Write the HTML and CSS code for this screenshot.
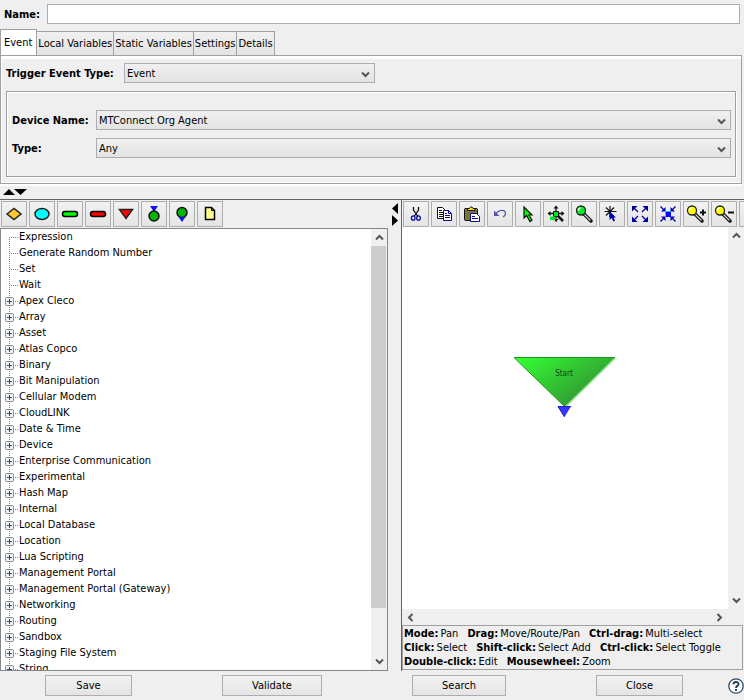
FILE: index.html
```html
<!DOCTYPE html>
<html lang="en">
<head>
<meta charset="utf-8">
<title>Trigger editor</title>
<link rel="stylesheet" href="styles.css">
</head>
<body>
<svg class="defs" aria-hidden="true">
  <symbol id="chev-down" viewBox="0 0 9 7"><path d="M1 1.5 4.5 5 8 1.5" fill="none" stroke="#555" stroke-width="2"/></symbol>
  <symbol id="chev-up" viewBox="0 0 9 7"><path d="M1 5.5 4.5 2 8 5.5" fill="none" stroke="#555" stroke-width="2"/></symbol>
  <symbol id="plus" viewBox="0 0 9 9"><rect x=".5" y=".5" width="8" height="8" rx="1" fill="#f2f2f2" stroke="#8b8b8b"/><path d="M2 4.5h5M4.5 2v5" stroke="#2c4a9a"/></symbol>
  <symbol id="lens" viewBox="0 0 24 24"><path d="m12 12 7 7" stroke="#111" stroke-width="3.5" stroke-linecap="round"/><path d="m12.500 12.500 6 6" stroke="#ccc" stroke-width="1.300"/><circle cx="9" cy="8.500" r="4.500" fill="currentColor" stroke="#222" stroke-width="1.300"/><path d="M6.500 8.500a2.500 2.500 0 0 1 2-2.500" fill="none" stroke="#fff" stroke-width="1.500"/></symbol>
</svg>

<div class="name-row">
  <label for="name">Name:</label>
  <input id="name" type="text">
</div>

<div class="tabs" role="tablist">
  <button class="tab selected" role="tab" aria-selected="true">Event</button>
  <button class="tab" role="tab">Local Variables</button>
  <button class="tab" role="tab">Static Variables</button>
  <button class="tab" role="tab">Settings</button>
  <button class="tab" role="tab">Details</button>
</div>

<section class="tab-panel">
  <div class="field trigger">
    <label for="trigger">Trigger Event Type:</label>
    <div class="combo short"><select id="trigger"><option>Event</option></select><svg><use href="#chev-down"/></svg></div>
  </div>
  <div class="group">
    <label for="device">Device Name:</label>
    <div class="combo"><select id="device"><option>MTConnect Org Agent</option></select><svg><use href="#chev-down"/></svg></div>
    <label for="type">Type:</label>
    <div class="combo"><select id="type"><option>Any</option></select><svg><use href="#chev-down"/></svg></div>
  </div>
</section>

<div class="divider-h">
  <svg viewBox="0 0 24 6" width="24" height="6"><path d="M0 6 6 0l6 6zM11 0h13l-6.500 6z"/></svg>
</div>

<main class="split">
  <section class="left">
    <div class="toolbar">
      <button class="tool" aria-label="Decision"><svg viewBox="0 0 24 24"><path d="m5 12 7-5.500 7 5.500-7 5.500z" fill="#ffc931" stroke="#222" stroke-width="1.500"/></svg></button>
      <button class="tool" aria-label="Ellipse"><svg viewBox="0 0 24 24"><ellipse cx="12" cy="12" rx="7" ry="5.500" fill="#0ff" stroke="#222" stroke-width="1.500"/></svg></button>
      <button class="tool" aria-label="Success end"><svg viewBox="0 0 24 24"><rect x="4.500" y="9.500" width="15" height="5" rx="2.500" fill="#0f0" stroke="#000" stroke-width="1.500"/></svg></button>
      <button class="tool" aria-label="Failure end"><svg viewBox="0 0 24 24"><rect x="4.500" y="9.500" width="15" height="5" rx="2.500" fill="#f00" stroke="#000" stroke-width="1.500"/></svg></button>
      <button class="tool" aria-label="Start"><svg viewBox="0 0 24 24"><path d="M5.500 7.500h13L12 16.500z" fill="#f00" stroke="#222" stroke-width="1.500"/></svg></button>
      <button class="tool" aria-label="Input"><svg viewBox="0 0 24 24"><path d="M8 4h8l-4 6z" fill="#11f"/><circle cx="12" cy="14" r="5" fill="#00b400" stroke="#111" stroke-width="1.500"/></svg></button>
      <button class="tool" aria-label="Output"><svg viewBox="0 0 24 24"><circle cx="12" cy="10.500" r="5" fill="#00b400" stroke="#111" stroke-width="1.500"/><path d="M8.500 15h7L12 20z" fill="#11f"/></svg></button>
      <button class="tool" aria-label="Note"><svg viewBox="0 0 24 24"><path d="M7.500 5.500h6l3 3v9h-9z" fill="#ffff8c" stroke="#000" stroke-width="1.500"/><path d="M13.500 5.500v3h3" fill="none" stroke="#000"/></svg></button>
    </div>
    <div class="tree-box">
      <ul class="tree">
        <li class="leaf">Expression</li>
        <li class="leaf">Generate Random Number</li>
        <li class="leaf">Set</li>
        <li class="leaf">Wait</li>
        <li><svg><use href="#plus"/></svg>Apex Cleco</li>
        <li><svg><use href="#plus"/></svg>Array</li>
        <li><svg><use href="#plus"/></svg>Asset</li>
        <li><svg><use href="#plus"/></svg>Atlas Copco</li>
        <li><svg><use href="#plus"/></svg>Binary</li>
        <li><svg><use href="#plus"/></svg>Bit Manipulation</li>
        <li><svg><use href="#plus"/></svg>Cellular Modem</li>
        <li><svg><use href="#plus"/></svg>CloudLINK</li>
        <li><svg><use href="#plus"/></svg>Date &amp; Time</li>
        <li><svg><use href="#plus"/></svg>Device</li>
        <li><svg><use href="#plus"/></svg>Enterprise Communication</li>
        <li><svg><use href="#plus"/></svg>Experimental</li>
        <li><svg><use href="#plus"/></svg>Hash Map</li>
        <li><svg><use href="#plus"/></svg>Internal</li>
        <li><svg><use href="#plus"/></svg>Local Database</li>
        <li><svg><use href="#plus"/></svg>Location</li>
        <li><svg><use href="#plus"/></svg>Lua Scripting</li>
        <li><svg><use href="#plus"/></svg>Management Portal</li>
        <li><svg><use href="#plus"/></svg>Management Portal (Gateway)</li>
        <li><svg><use href="#plus"/></svg>Networking</li>
        <li><svg><use href="#plus"/></svg>Routing</li>
        <li><svg><use href="#plus"/></svg>Sandbox</li>
        <li><svg><use href="#plus"/></svg>Staging File System</li>
        <li><svg><use href="#plus"/></svg>String</li>
      </ul>
      <div class="vscroll"><svg><use href="#chev-up"/></svg><span class="track"><span class="thumb"></span></span><svg><use href="#chev-down"/></svg></div>
    </div>
  </section>

  <div class="divider-v"><svg viewBox="0 0 6 23" width="6" height="23"><path d="M6 0v11L0 5.500zM0 12v11l6-5.500z"/></svg></div>

  <section class="right">
    <div class="toolbar">
      <button class="tool" aria-label="Cut"><svg viewBox="0 0 24 24"><path d="M9.500 5v3l4 6M14.500 5v3l-4 6" fill="none" stroke="#111" stroke-width="1.300"/><ellipse cx="9.200" cy="16" rx="1.800" ry="2.200" fill="none" stroke="#0a0aa0" stroke-width="1.300"/><ellipse cx="14.500" cy="16" rx="1.800" ry="2.200" fill="none" stroke="#0a0aa0" stroke-width="1.300"/></svg></button>
      <button class="tool" aria-label="Copy"><svg viewBox="0 0 24 24"><path d="M5.500 5.500h5l3 3v8h-8z" fill="#fff" stroke="#111"/><path d="M7 8.500h3M7 10.500h4M7 12.500h4M7 14.500h4" stroke="#111"/><path d="M11.500 8.500h5l3 3v7h-8z" fill="#fff" stroke="#0a0a90"/><path d="M16.500 8.500v3h3M13 11.500h2M13 13.500h5M13 15.500h5" fill="none" stroke="#0a0a90"/></svg></button>
      <button class="tool" aria-label="Paste"><svg viewBox="0 0 24 24"><rect x="4.500" y="6.500" width="13" height="12" rx="1" fill="#77773a" stroke="#111"/><path d="M7.500 8.500v-2h2l1-1.500h1.500l1 1.500h2v2z" fill="#ffe21c" stroke="#111"/><path d="M10.500 11.500h6l3 3v5h-9z" fill="#fff" stroke="#0a0a90"/><path d="M12 14.500h3M12 16.500h6" stroke="#0a0a90"/></svg></button>
      <button class="tool" aria-label="Undo"><svg viewBox="0 0 24 24"><path d="M7.500 12.500C10.500 7.500 17.500 7 17.500 11.500q0 2-2.500 3.500" fill="none" stroke="#5555ab" stroke-width="1.300"/><path d="M6 8.500V14h5.500z" fill="#5555ab"/></svg></button>
      <button class="tool" aria-label="Select"><svg viewBox="0 0 24 24"><path d="M8 5v11l2.500-2.500 3.500 6 2-1.500-3-5h3z" fill="#0f0" stroke="#111" stroke-width="1.200"/></svg></button>
      <button class="tool" aria-label="Pan"><svg viewBox="0 0 24 24"><path d="M12 5v13M4.500 11.500h15" stroke="#111" stroke-width="1.300"/><path d="m12 3.500 2.500 3h-5zM12 20l2.500-3h-5zM3.500 11.500l3-2.500v5zM20.500 11.500l-3-2.500v5z" fill="#111"/><path d="m13 13 6 6" stroke="#111" stroke-width="2.500"/><path d="M9.500 9.500h5v5h-5z" fill="#00e82a" stroke="#111"/><path d="M6 14.500h5.500v3.500H6z" fill="#00e82a"/></svg></button>
      <button class="tool green" aria-label="Zoom"><svg><use href="#lens"/></svg></button>
      <button class="tool" aria-label="Select point"><svg viewBox="0 0 24 24"><path d="M10 4v11M4.500 9.500h12M6 5.500l4 4-4 4M14 5.500l-4 4" fill="none" stroke="#111" stroke-width="1.200"/><path d="M9.500 9v9l2-2 2 3.500 1.500-1-1.500-3h2.500z" fill="#0000a8"/></svg></button>
      <button class="tool" aria-label="Fit all"><svg viewBox="0 0 24 24"><path d="M4 4h5.500L4 9.500zM20 4v5.500L14.500 4zM4 20v-5.500L9.500 20zM20 20h-5.500l5.500-5.500z" fill="#0000a8"/><path d="m5 5 5 5M19 5l-5 5M5 19l5-5M19 19l-5-5" stroke="#0000a8" stroke-width="1.300"/></svg></button>
      <button class="tool" aria-label="Fit selection"><svg viewBox="0 0 24 24"><path d="M9.500 5v4.500H5zM14.500 5v4.500H19zM9.500 19v-4.500H5zM14.500 19v-4.500H19z" fill="#0000a8"/><path d="m4.500 4.500 4 4M19.500 4.500l-4 4M4.500 19.500l4-4M19.500 19.500l-4-4" stroke="#0000a8" stroke-width="1.300"/><path d="M9 9h6v6H9z" fill="#1cf"/><path d="M10 10h5v5h-5z" fill="#00f"/></svg></button>
      <button class="tool yellow" aria-label="Zoom in"><svg viewBox="0 0 24 24"><use href="#lens" x="-1"/><path d="M16 10.500h6M19 7.500v6" stroke="#111" stroke-width="2"/></svg></button>
      <button class="tool yellow" aria-label="Zoom out"><svg viewBox="0 0 24 24"><use href="#lens" x="-1"/><path d="M16 10.500h6" stroke="#111" stroke-width="2"/></svg></button>
      <button class="tool" aria-label="More tools"></button>
    </div>
    <div class="graph-box">
      <div class="canvas">
        <div class="node">
          <svg viewBox="0 0 102 61" width="102" height="61">
            <defs><linearGradient id="g" x1="0.100" y1="0" x2="0.800" y2="0.500"><stop offset="0" stop-color="#33fa33"/><stop offset="1" stop-color="#33a433"/></linearGradient></defs>
            <path d="M0 .5h101L51 50z" fill="url(#g)"/>
            <path d="m101 1-50 49" stroke="#7ce07c" stroke-width="1.500"/>
            <path d="M51 50 0 .5h101" fill="none" stroke="#1c981c"/>
            <path d="M44 49.500h13L50.500 60z" fill="#3535ff"/><path d="M50.500 60 44 49.500h13" fill="none" stroke="#1b1bb8"/>
          </svg>
          <span class="node-label">Start</span>
        </div>
      </div>
      <div class="vscroll"><svg><use href="#chev-up"/></svg><svg><use href="#chev-down"/></svg></div>
      <div class="hscroll"><svg viewBox="0 0 7 9" width="7" height="9"><path d="M5.500 1 2 4.500 5.500 8" fill="none" stroke="#555" stroke-width="2"/></svg><svg viewBox="0 0 7 9" width="7" height="9"><path d="M1.500 1 5 4.500 1.500 8" fill="none" stroke="#555" stroke-width="2"/></svg></div>
    </div>
    <div class="status">
      <p><span><b>Mode:</b> Pan</span><span><b>Drag:</b> Move/Route/Pan</span><span><b>Ctrl-drag:</b> Multi-select</span></p>
      <p><span><b>Click:</b> Select</span><span><b>Shift-click:</b> Select Add</span><span><b>Ctrl-click:</b> Select Toggle</span></p>
      <p><span><b>Double-click:</b> Edit</span><span><b>Mousewheel:</b> Zoom</span></p>
    </div>
  </section>
</main>

<footer>
  <div class="actions">
    <button class="action">Save</button>
    <button class="action wide">Validate</button>
    <button class="action medium">Search</button>
    <button class="action">Close</button>
  </div>
  <button class="help" aria-label="Help"><svg viewBox="0 0 16 16" width="16" height="16"><circle cx="8" cy="8" r="7.200" fill="#fff" stroke="#2c4a66" stroke-width="1.300"/><path d="M5.500 6.300C5.500 3.300 10.500 3.300 10.500 6.200 10.500 8 8 7.800 8 10M8 11v2" fill="none" stroke="#1f3c58" stroke-width="1.900"/></svg></button>
</footer>
</body>
</html>
```
FILE: styles.css
```css
* { box-sizing: border-box; }

body {
  margin: 0;
  height: 100vh;
  display: flex;
  flex-direction: column;
  overflow: hidden;
  background: #efefef;
  color: #000;
  font: 11px/14px "DejaVu Sans Condensed", Tahoma, "Noto Sans", sans-serif;
}

button, input, select { font: inherit; color: inherit; border-radius: 0; margin: 0; }
button { padding: 0; }
svg { display: block; flex: none; }
label, b { font-weight: bold; }
label { padding-top: 1px; }
.defs { position: absolute; width: 0; height: 0; }

.name-row {
  display: flex;
  align-items: center;
  gap: 7px;
  padding: 4px 4px 5px;
}
.name-row label { width: 36px; white-space: nowrap; }
.name-row input {
  flex: 1;
  height: 20px;
  border: 1px solid #abadb3;
  background: #fff;
}

.tabs { display: flex; align-items: flex-end; height: 26px; }
.tab {
  height: 24px;
  padding: 1px 1px 0;
  border: 1px solid #a0a0a0;
  border-bottom: 0;
  background: linear-gradient(#f0f0f0, #e4e4e4);
  white-space: nowrap;
}
.tab + .tab { margin-left: -1px; }
.tab.selected { height: 26px; padding: 0 4px 0 3px; background: #fff; }

.tab-panel {
  margin-right: 2px;
  padding: 7px 5px 6px;
  border: 1px solid #a0a0a0;
  box-shadow: inset 0 3px #fff, inset 1px -1px #fff, 0 2px #fff;
}
.field { display: flex; align-items: center; }
.field label { width: 118px; white-space: nowrap; }
.combo { position: relative; min-width: 0; }
.combo.short { width: 251px; }
.combo select {
  display: block;
  width: 100%;
  height: 20px;
  padding: 1px 20px 0 2px;
  border: 1px solid #abadb3;
  background: linear-gradient(#f0f0f0, #e3e3e3);
  appearance: none;
}
.combo svg {
  position: absolute;
  right: 5px;
  top: 8px;
  width: 9px;
  height: 7px;
  pointer-events: none;
}
.group {
  display: grid;
  grid-template-columns: 84px 1fr;
  align-items: center;
  row-gap: 8px;
  margin-top: 8px;
  padding: 18px 4px 18px 5px;
  border: 1px solid #a0a0a0;
  box-shadow: inset 1px 1px #fff, 1px 1px #fff;
}

.divider-h { padding: 5px 3px 4px; }

.split {
  flex: 1;
  min-height: 0;
  display: grid;
  grid-template-columns: minmax(0, 388fr) 13px minmax(0, 343fr);
  border-top: 1px solid #646464;
}
.left, .right { display: flex; flex-direction: column; min-height: 0; min-width: 0; }
.toolbar { display: flex; gap: 2px; padding: 1px 1px 0; overflow: hidden; flex: none; }
.tool {
  flex: none;
  width: 26px;
  height: 26px;
  border: 1px solid #adadad;
  background: linear-gradient(#f2f2f2, #e4e4e4);
}
.tool svg { width: 24px; height: 24px; }
.green { color: #0e2; }
.yellow { color: #ff0; }

.tree-box {
  flex: 1;
  min-height: 0;
  display: flex;
  margin-top: 1px;
  border: 1px solid #828790;
  background: #fff;
}
.tree {
  flex: 1;
  margin: 0;
  padding: 0 0 0 4px;
  list-style: none;
  overflow: hidden;
}
.tree li {
  display: flex;
  align-items: center;
  height: 16px;
  white-space: nowrap;
  background:
    repeating-linear-gradient(#808080 0 1px, transparent 1px 2px) 4px 0 / 1px 16px no-repeat,
    repeating-linear-gradient(90deg, #808080 0 1px, transparent 1px 2px) 4px 8px / 10px 1px no-repeat;
}
.tree li:first-child { background-position: 4px 8px, 4px 8px; }
.tree svg { width: 9px; height: 9px; margin-right: 5px; }
.tree .leaf { padding-left: 14px; }

.vscroll {
  width: 16px;
  flex: none;
  display: flex;
  flex-direction: column;
  align-items: center;
  justify-content: space-between;
  padding: 5px 0;
  background: #f0f0f0;
}
.vscroll svg { width: 9px; height: 7px; }
.track { flex: 1; width: 100%; margin: 5px 0; padding-right: 1px; }
.thumb { display: block; height: 89%; background: #cdcdcd; }

.divider-v { padding: 3px 0 0 4px; }

.right { border-left: 1px solid #646464; }
.graph-box {
  flex: 1;
  min-height: 0;
  display: grid;
  grid-template: minmax(0, 1fr) 16px / minmax(0, 1fr) 16px;
}
.canvas { position: relative; background: #fff; overflow: hidden; }
.node { position: absolute; left: 112px; top: 130px; }
.node-label {
  position: absolute;
  left: 0;
  top: 10px;
  width: 100px;
  text-align: center;
  font-size: 8px;
  color: #0b450b;
}
.hscroll { display: flex; align-items: center; justify-content: space-between; padding: 0 5px; }
.status {
  flex: none;
  margin: 0 1px 1px 0;
  padding: 1px 1px 0;
  border: 1px solid #a0a0a0;
}
.status p { display: flex; gap: 9px; margin: 0; white-space: nowrap; }
.status b { margin-right: -1px; }

footer { display: flex; align-items: center; height: 29px; flex: none; }
.actions { flex: 1; display: flex; justify-content: space-around; }
.action {
  width: 87px;
  height: 21px;
  border: 1px solid #adadad;
  background: linear-gradient(#f2f2f2, #e4e4e4);
}
.action.medium { width: 94px; }
.action.wide { width: 100px; }
.help {
  width: 16px;
  height: 16px;
  border: 0;
  background: none;
}
```
